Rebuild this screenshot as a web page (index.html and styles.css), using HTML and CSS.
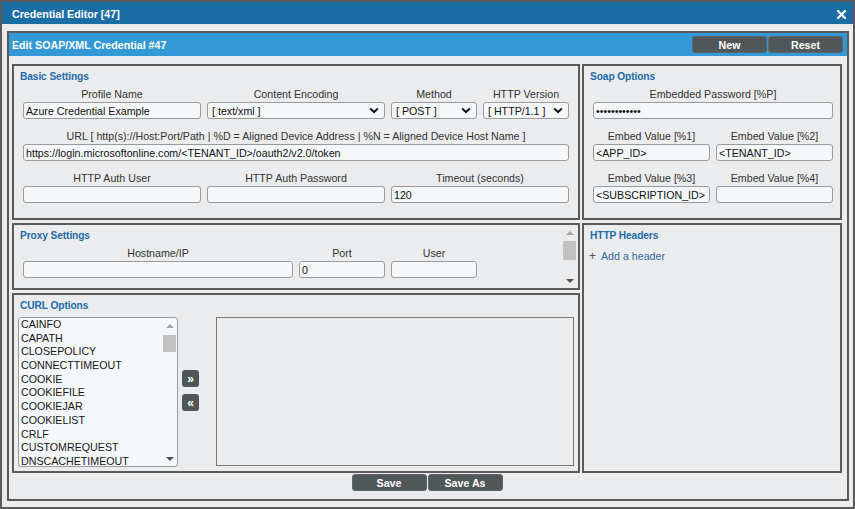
FILE: index.html
```html
<!DOCTYPE html>
<html>
<head>
<meta charset="utf-8">
<link rel="stylesheet" href="styles.css">
</head>
<body>
<div class="window">
  <div class="titlebar">
    <span class="title">Credential Editor [47]</span>
    <svg class="close" width="9" height="9" viewBox="0 0 9 9"><path d="M1 1L8 8M8 1L1 8" stroke="#fff" stroke-width="2.2" stroke-linecap="square"/></svg>
  </div>
  <div class="wbody">
    <div class="outer">
      <div class="hdr">
        <span class="hdr-title">Edit SOAP/XML Credential #47</span>
        <div class="btn-group">
          <button class="btn">New</button>
          <button class="btn">Reset</button>
        </div>
      </div>
      <div class="content">
        <div class="grid">
          <section class="panel basic">
            <h3>Basic Settings</h3>
            <div class="fields six">
              <div class="field s2"><span class="lbl">Profile Name</span><input class="inp" value="Azure Credential Example"></div>
              <div class="field s2"><span class="lbl">Content Encoding</span><div class="inp sel"><span>[ text/xml ]</span><svg width="10" height="7" viewBox="0 0 10 7"><path d="M1.2 1.5L5 5.2L8.8 1.5" fill="none" stroke="#111" stroke-width="2"/></svg></div></div>
              <div class="field"><span class="lbl">Method</span><div class="inp sel"><span>[ POST ]</span><svg width="10" height="7" viewBox="0 0 10 7"><path d="M1.2 1.5L5 5.2L8.8 1.5" fill="none" stroke="#111" stroke-width="2"/></svg></div></div>
              <div class="field"><span class="lbl">HTTP Version</span><div class="inp sel"><span>[ HTTP/1.1 ]</span><svg width="10" height="7" viewBox="0 0 10 7"><path d="M1.2 1.5L5 5.2L8.8 1.5" fill="none" stroke="#111" stroke-width="2"/></svg></div></div>
              <div class="field s6"><span class="lbl">URL [ http(s)://Host:Port/Path | %D = Aligned Device Address | %N = Aligned Device Host Name ]</span><input class="inp" value="https://login.microsoftonline.com/&lt;TENANT_ID&gt;/oauth2/v2.0/token"></div>
              <div class="field s2"><span class="lbl">HTTP Auth User</span><input class="inp" value=""></div>
              <div class="field s2"><span class="lbl">HTTP Auth Password</span><input class="inp" type="password" value=""></div>
              <div class="field s2"><span class="lbl">Timeout (seconds)</span><input class="inp" value="120"></div>
            </div>
          </section>

          <section class="panel soap">
            <h3>Soap Options</h3>
            <div class="fields two">
              <div class="field s2"><span class="lbl">Embedded Password [%P]</span><input class="inp" type="password" value="xxxxxxxxxxxx"></div>
              <div class="field"><span class="lbl">Embed Value [%1]</span><input class="inp" value="&lt;APP_ID&gt;"></div>
              <div class="field"><span class="lbl">Embed Value [%2]</span><input class="inp" value="&lt;TENANT_ID&gt;"></div>
              <div class="field"><span class="lbl">Embed Value [%3]</span><input class="inp" value="&lt;SUBSCRIPTION_ID&gt;"></div>
              <div class="field"><span class="lbl">Embed Value [%4]</span><input class="inp" value=""></div>
            </div>
          </section>

          <section class="panel proxy">
            <div class="pmain">
              <h3>Proxy Settings</h3>
              <div class="fields five">
                <div class="field s3"><span class="lbl">Hostname/IP</span><input class="inp" value=""></div>
                <div class="field"><span class="lbl">Port</span><input class="inp" value="0"></div>
                <div class="field"><span class="lbl">User</span><input class="inp" value=""></div>
              </div>
            </div>
            <div class="vscroll">
              <div class="sb-btn"><span class="tri-up"></span></div>
              <div class="thumb proxy-thumb"></div>
              <div class="sb-fill"></div>
              <div class="sb-btn"><span class="tri-down"></span></div>
            </div>
          </section>

          <section class="panel curl">
            <h3>CURL Options</h3>
            <div class="curl-row">
              <div class="listbox">
                <div class="opts">
                  <div class="opt">CAINFO</div>
                  <div class="opt">CAPATH</div>
                  <div class="opt">CLOSEPOLICY</div>
                  <div class="opt">CONNECTTIMEOUT</div>
                  <div class="opt">COOKIE</div>
                  <div class="opt">COOKIEFILE</div>
                  <div class="opt">COOKIEJAR</div>
                  <div class="opt">COOKIELIST</div>
                  <div class="opt">CRLF</div>
                  <div class="opt">CUSTOMREQUEST</div>
                  <div class="opt">DNSCACHETIMEOUT</div>
                </div>
                <div class="vscroll">
                  <div class="sb-btn"><span class="tri-up"></span></div>
                  <div class="thumb list-thumb"></div>
                  <div class="sb-fill"></div>
                  <div class="sb-btn"><span class="tri-down"></span></div>
                </div>
              </div>
              <div class="movers">
                <button class="mv">&raquo;</button>
                <button class="mv">&laquo;</button>
              </div>
              <div class="selected-box"></div>
            </div>
          </section>

          <section class="panel headers">
            <h3>HTTP Headers</h3>
            <div class="add"><span class="plus">+</span><span class="add-text">Add a header</span></div>
          </section>
        </div>
        <div class="save-row">
          <button class="btn">Save</button>
          <button class="btn">Save As</button>
        </div>
      </div>
    </div>
  </div>
</div>
</body>
</html>
```

FILE: styles.css
```css
* { box-sizing: border-box; margin: 0; padding: 0; }
html, body { width: 855px; height: 509px; overflow: hidden; }
body {
  font-family: "Liberation Sans", Arial, sans-serif;
  font-size: 10.67px;
  color: #333;
  background: #ebecee;
}
.window {
  width: 855px;
  height: 509px;
  border: 2px solid #5a5a5a;
  background: #ebecee;
  display: flex;
  flex-direction: column;
}
.titlebar {
  height: 22px;
  flex: none;
  background: #1b6ea4;
  color: #fff;
  display: flex;
  align-items: center;
  justify-content: space-between;
  padding: 2px 7px 0 10px;
}
.title { font-weight: bold; }
.close { display: block; }
.wbody {
  flex: 1;
  padding: 7px 4px 6px 5px;
  display: flex;
}
.outer {
  flex: 1;
  border: 2px solid #5a5a5a;
  display: flex;
  flex-direction: column;
}
.hdr {
  height: 23px;
  flex: none;
  background: #3399d6;
  color: #fff;
  font-weight: bold;
  display: flex;
  align-items: center;
  justify-content: space-between;
  padding: 0 4px 0 3px;
}
.btn-group { display: flex; gap: 1px; }
.btn {
  width: 75px;
  height: 17px;
  border: 1px solid #5e6465;
  border-radius: 3px;
  background: #4f5758;
  color: #fff;
  font: bold 10.67px "Liberation Sans", Arial, sans-serif;
  display: flex;
  align-items: center;
  justify-content: center;
}
.content {
  flex: 1;
  padding: 8px 5px 0 3px;
  display: flex;
  flex-direction: column;
}
.grid {
  display: grid;
  grid-template-columns: 568px 260px;
  grid-template-rows: 156px 67px 180px;
  gap: 3px 2px;
}
.panel {
  border: 2px solid #5a5a5a;
  padding: 4px 4px 0 4px;
  min-width: 0;
}
.basic { grid-column: 1; grid-row: 1; }
.soap { grid-column: 2; grid-row: 1; }
.proxy { grid-column: 1; grid-row: 2; padding: 0 1px 0 0; display: flex; }
.curl { grid-column: 1; grid-row: 3; }
.headers { grid-column: 2; grid-row: 2 / 4; }

h3 {
  font-size: 10.2px;
  font-weight: bold;
  color: #236aa7;
  line-height: 14px;
  padding-left: 2px;
  letter-spacing: -0.1px;
  margin-bottom: 4px;
}
.fields {
  display: grid;
  gap: 11px 6px;
  margin-left: 5px;
}
.six { grid-template-columns: repeat(6, 86px); }
.five { grid-template-columns: repeat(5, 86px); }
.two { grid-template-columns: repeat(2, 117px); }
.s2 { grid-column: span 2; }
.s3 { grid-column: span 3; }
.s6 { grid-column: 1 / -1; }
.field { display: flex; flex-direction: column; gap: 1px; min-width: 0; }
.lbl {
  text-align: center;
  line-height: 13px;
  height: 13px;
  white-space: nowrap;
  color: #333;
}
.inp {
  height: 17px;
  width: 100%;
  border: 1px solid #9a9a9a;
  border-radius: 3px;
  background: #f5f8fa;
  font: 10.67px "Liberation Sans", Arial, sans-serif;
  color: #111;
  padding: 0 2px;
  outline: none;
}
.sel {
  display: flex;
  align-items: center;
  justify-content: space-between;
  padding: 0 5px 0 4px;
  white-space: nowrap;
}
.sel svg { display: block; flex: none; }

.pmain { flex: 1; min-width: 0; padding: 4px 0 0 4px; }
.vscroll {
  width: 15px;
  flex: none;
  display: flex;
  flex-direction: column;
  align-items: center;
}
.sb-btn {
  height: 15px;
  width: 15px;
  flex: none;
  display: flex;
  align-items: center;
  justify-content: center;
}
.tri-up {
  width: 0; height: 0;
  border-left: 4px solid transparent;
  border-right: 4px solid transparent;
  border-bottom: 4px solid #a3a3a3;
}
.tri-down {
  width: 0; height: 0;
  border-left: 4px solid transparent;
  border-right: 4px solid transparent;
  border-top: 4px solid #505050;
}
.thumb { width: 13px; background: #c1c1c1; flex: none; }
.proxy-thumb { height: 19px; margin-top: 1px; }
.list-thumb { height: 17px; margin-top: 2px; }
.sb-fill { flex: 1; }

.curl-row { display: flex; align-items: flex-start; }
.listbox {
  width: 160px;
  height: 150px;
  flex: none;
  border: 1px solid #9a9a9a;
  border-radius: 3px;
  background: #f5f8fa;
  display: flex;
  overflow: hidden;
}
.opts { flex: 1; min-width: 0; padding-left: 2px; overflow: hidden; }
.opt { line-height: 13.7px; height: 13.7px; color: #151515; white-space: nowrap; }
.listbox .vscroll { height: 100%; }
.movers {
  display: flex;
  flex-direction: column;
  gap: 7px;
  margin: 0 17px 0 4px;
  padding-top: 53px;
}
.mv {
  width: 17px;
  height: 17px;
  border: none;
  border-radius: 3px;
  background: #4f5758;
  color: #fff;
  font: bold 12px "Liberation Sans", Arial, sans-serif;
  display: flex;
  align-items: center;
  justify-content: center;
  line-height: 1;
}
.selected-box {
  flex: 1;
  height: 149px;
  border: 1px solid #7a7a7a;
}

.add {
  display: flex;
  align-items: center;
  gap: 5px;
  margin-top: 6px;
  padding-left: 1px;
  line-height: 14px;
}
.plus { color: #555; font-size: 12px; }
.add-text { color: #35689c; }

.save-row {
  display: flex;
  justify-content: center;
  gap: 1px;
  margin-top: 1px;
}
```
